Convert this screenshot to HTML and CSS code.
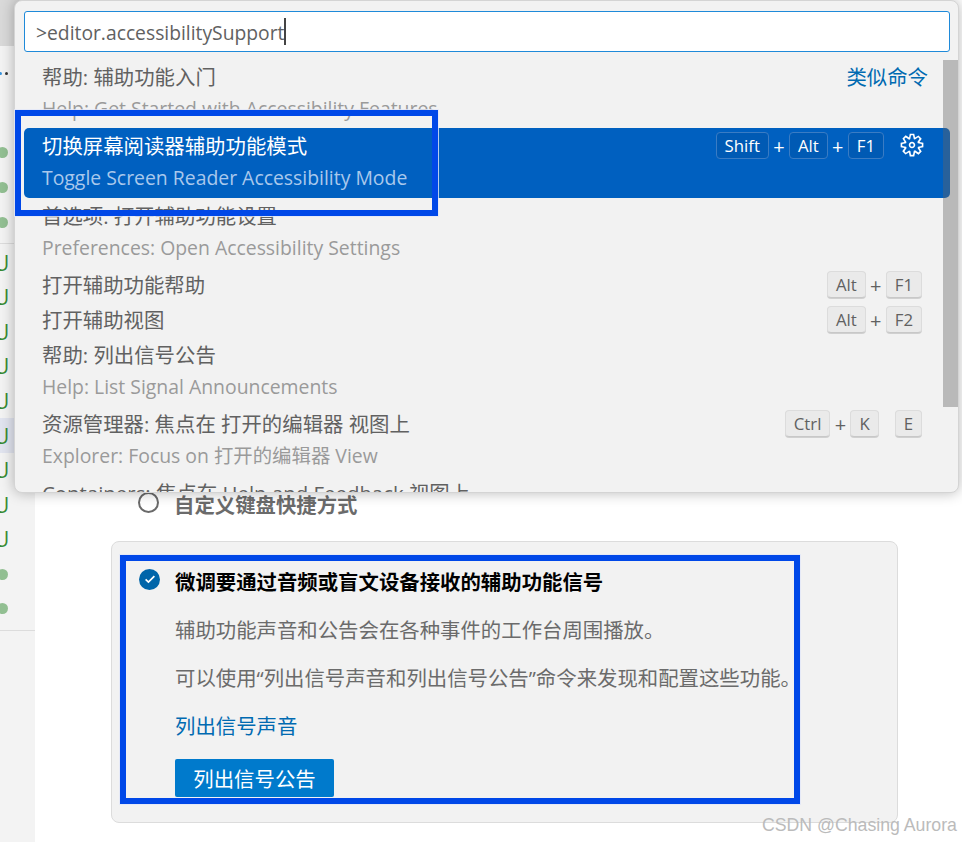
FILE: index.html
```html
<!DOCTYPE html>
<html lang="zh-CN">

<head>
    <meta charset="utf-8">
    <title>Command Palette</title>
    <link rel="stylesheet" href="styles.css">
</head>

<body>
    <div class="workbench">
        <div class="sidebar">
            <div class="sidebar-header"></div>
            <div class="tree-row more-row"><span class="more-dot blue"></span><span class="more-dot"></span></div>
            <div class="tree-group first-group">
                <div class="tree-row"><span class="dot"></span></div>
                <div class="tree-row"><span class="dot"></span></div>
                <div class="tree-row"><span class="dot"></span></div>
            </div>
            <div class="tree-group">
                <div class="tree-row"><span class="untracked">U</span></div>
                <div class="tree-row"><span class="untracked">U</span></div>
                <div class="tree-row"><span class="untracked">U</span></div>
                <div class="tree-row"><span class="untracked">U</span></div>
                <div class="tree-row"><span class="untracked">U</span></div>
                <div class="tree-row active"><span class="untracked">U</span></div>
                <div class="tree-row"><span class="untracked">U</span></div>
                <div class="tree-row"><span class="untracked">U</span></div>
                <div class="tree-row"><span class="untracked">U</span></div>
                <div class="tree-row"><span class="dot"></span></div>
                <div class="tree-row"><span class="dot"></span></div>
            </div>
        </div>

        <div class="main">
            <div class="step">
                <span class="radio"></span>
                <div class="step-title muted">自定义键盘快捷方式</div>
            </div>
            <div class="step card">
                <span class="check">
                    <svg viewBox="0 0 16 16" width="14" height="14">
                        <path d="M3 8.5l3.2 3L13 4.8" fill="none" stroke="#fff" stroke-width="2"/>
                    </svg>
                </span>
                <div class="step-body">
                    <div class="step-title">微调要通过音频或盲文设备接收的辅助功能信号</div>
                    <p class="step-text">辅助功能声音和公告会在各种事件的工作台周围播放。</p>
                    <p class="step-text">可以使用“列出信号声音和列出信号公告”命令来发现和配置这些功能。</p>
                    <a class="step-link">列出信号声音</a>
                    <button class="step-button">列出信号公告</button>
                </div>
            </div>
        </div>
    </div>

    <div class="palette">
        <div class="palette-input">&gt;editor.accessibilitySupport<span class="caret"></span></div>
        <div class="palette-list">
            <div class="row tall">
                <div>
                    <div class="row-title">帮助: 辅助功能入门</div>
                    <div class="row-sub">Help: Get Started with Accessibility Features</div>
                </div>
                <a class="row-link">类似命令</a>
            </div>
            <div class="row tall selected">
                <div>
                    <div class="row-title">切换屏幕阅读器辅助功能模式</div>
                    <div class="row-sub">Toggle Screen Reader Accessibility Mode</div>
                </div>
                <div class="keys">
                    <kbd>Shift</kbd><i>+</i><kbd>Alt</kbd><i>+</i><kbd>F1</kbd>
                    <svg class="gear" viewBox="0 0 16 16" width="26" height="26">
                        <path fill="#fff" fill-rule="evenodd" d="M9.1 4.4L8.6 2H7.4l-.5 2.4-.7.3-2-1.3-.9.8 1.3 2-.2.7-2.4.5v1.2l2.4.5.3.8-1.3 2 .8.8 2-1.3.8.3.4 2.3h1.2l.5-2.4.8-.3 2 1.3.8-.8-1.3-2 .3-.8 2.3-.4V7.4l-2.4-.5-.3-.8 1.3-2-.8-.8-2 1.3-.7-.2zM9.4 1l.5 2.4L12 2.1l2 2-1.4 2.1 2.4.4v2.8l-2.4.5L14 12l-2 2-2.1-1.4-.5 2.4H6.6l-.5-2.4L4 13.9l-2-2 1.4-2.1L1 9.4V6.6l2.4-.5L2.1 4l2-2 2.1 1.4.4-2.4h2.8zm.6 7c0 1.1-.9 2-2 2s-2-.9-2-2 .9-2 2-2 2 .9 2 2zM8 9c.6 0 1-.4 1-1s-.4-1-1-1-1 .4-1 1 .4 1 1 1z"/>
                    </svg>
                </div>
            </div>
            <div class="row tall">
                <div>
                    <div class="row-title">首选项: 打开辅助功能设置</div>
                    <div class="row-sub">Preferences: Open Accessibility Settings</div>
                </div>
            </div>
            <div class="row">
                <div class="row-title">打开辅助功能帮助</div>
                <div class="keys"><kbd>Alt</kbd><i>+</i><kbd>F1</kbd></div>
            </div>
            <div class="row">
                <div class="row-title">打开辅助视图</div>
                <div class="keys"><kbd>Alt</kbd><i>+</i><kbd>F2</kbd></div>
            </div>
            <div class="row tall">
                <div>
                    <div class="row-title">帮助: 列出信号公告</div>
                    <div class="row-sub">Help: List Signal Announcements</div>
                </div>
            </div>
            <div class="row tall">
                <div>
                    <div class="row-title">资源管理器: 焦点在 打开的编辑器 视图上</div>
                    <div class="row-sub">Explorer: Focus on 打开的编辑器 View</div>
                </div>
                <div class="keys"><kbd>Ctrl</kbd><i>+</i><kbd>K</kbd><kbd class="chord">E</kbd></div>
            </div>
            <div class="row tall">
                <div>
                    <div class="row-title">Containers: 焦点在 Help and Feedback 视图上</div>
                </div>
            </div>
        </div>
        <div class="palette-scrollbar"></div>
    </div>

    <div class="mark mark-command"></div>
    <div class="mark mark-card"></div>
    <div class="watermark">CSDN @Chasing Aurora</div>
</body>

</html>
```

FILE: styles.css
```css
* {
    box-sizing: border-box;
}

html,
body {
    margin: 0;
    height: 842px;
    overflow: hidden;
}

body {
    position: relative;
    background-color: #fff;
    font-family: "Open Sans", "Noto Sans CJK SC", sans-serif;
    font-size: 20.4px;
    color: #616161;
}

.workbench {
    display: flex;
    height: 842px;
}

/* left strip of the explorer, mostly hidden by the palette */
.sidebar {
    width: 35px;
    flex-shrink: 0;
    background-color: #f3f3f3;
    overflow: hidden;
}

.sidebar-header {
    height: 46px;
    background-color: #d9d9d9;
}

.tree-row {
    height: 34.6px;
    display: flex;
    align-items: center;
}

.tree-row.active {
    background-color: #e1e4ef;
}

.more-row {
    margin-top: 10px;
    gap: 3px;
}

.more-dot {
    width: 3px;
    height: 3px;
    border-radius: 50%;
    background-color: #333;
}

.more-dot.blue {
    background-color: #3a94dc;
    margin-left: -1px;
}

.first-group {
    margin-top: 45px;
}

.tree-group {
    border-bottom: 1px solid #dcdcdc;
    padding-bottom: 4px;
}

.first-group + .tree-group {
    padding-top: 1px;
}

.dot {
    width: 11px;
    height: 11px;
    margin-left: -3px;
    border-radius: 50%;
    background-color: #92bf92;
}

.untracked {
    margin-left: -6px;
    font-size: 21px;
    color: #388a34;
}

.main {
    flex: 1;
    padding: 490px 0 0 76px;
}

.step {
    display: flex;
    gap: 15px;
    width: 787px;
    padding-left: 27px;
    line-height: 30px;
}

.radio,
.check {
    width: 21px;
    height: 21px;
    margin-top: 1.5px;
    border-radius: 50%;
    flex-shrink: 0;
}

.radio {
    border: 2px solid #6a6a6a;
    background-color: #fff;
}

.check {
    display: flex;
    align-items: center;
    justify-content: center;
    background-color: #0065a9;
}

.step-title {
    font-weight: bold;
    color: #000;
}

.step-title.muted {
    color: #6b6b6b;
}

.card {
    height: 282px;
    margin-top: 21px;
    padding-top: 25px;
    background-color: #f2f2f2;
    border: 1px solid #dcdcdc;
    border-radius: 8px;
}

.step-body {
    display: flex;
    flex-direction: column;
    align-items: flex-start;
}

.step-text {
    margin: 18px 0 0;
    color: #6b6b6b;
}

.step-link {
    margin-top: 18px;
    color: #006ab1;
}

.step-button {
    width: 159px;
    height: 38px;
    margin-top: 18px;
    padding: 0;
    border: none;
    border-radius: 2px;
    background-color: #007acc;
    color: #fff;
    font-family: inherit;
    font-size: 20.4px;
}

/* command palette */
.palette {
    position: absolute;
    left: 14px;
    top: 0;
    width: 945px;
    height: 493px;
    padding: 10px 8px 0 9px;
    background-color: #f2f2f2;
    border: 1px solid #d4d4d4;
    border-radius: 8px;
    box-shadow: 0 0 14px rgba(0, 0, 0, 0.28);
    overflow: hidden;
}

.palette-input {
    display: flex;
    align-items: center;
    height: 41px;
    padding: 2px 0 0 11px;
    background-color: #fff;
    border: 1px solid #1f8ad9;
    border-radius: 3px;
    font-size: 19.3px;
}

.caret {
    width: 2px;
    height: 27px;
    margin-top: -2px;
    background-color: #444;
}

.palette-list {
    margin-top: 7px;
}

.row {
    display: flex;
    justify-content: space-between;
    height: 35px;
    padding: 0 28px 0 18px;
}

.row.tall {
    height: 69.3px;
}

.row-title {
    line-height: 37px;
}

.row-sub {
    font-size: 19.4px;
    line-height: 25px;
    color: #9a9a9a;
}

.row-link {
    margin-right: -6px;
    line-height: 37px;
    color: #006ab1;
}

.row.selected {
    border-radius: 5px;
    background-color: #0060c0;
    color: #fff;
    padding-right: 25px;
}

.row.selected .row-sub {
    color: #a9c8ec;
}

.keys {
    display: flex;
    align-items: flex-start;
    padding-top: 4px;
}

.keys i {
    width: 20px;
    text-align: center;
    font-style: normal;
    font-size: 20px;
    line-height: 30px;
}

kbd {
    height: 27px;
    padding: 0 8px;
    background-color: #eaeaea;
    border: 1px solid #dcdcdc;
    border-bottom-color: #c8c8c8;
    border-radius: 4px;
    box-shadow: 0 1px 0 #d0d0d0;
    font-family: inherit;
    font-size: 16.8px;
    line-height: 25px;
}

kbd.chord {
    margin-left: 16px;
}

.selected kbd {
    background-color: #005ab4;
    border-color: #3a7cc4;
    box-shadow: none;
}

.gear {
    margin-left: 15px;
}

.palette-scrollbar {
    position: absolute;
    right: 0;
    top: 59px;
    width: 15px;
    height: 347px;
    background-color: rgba(100, 100, 100, 0.4);
}

/* blue rectangles drawn on top of the screenshot */
.mark {
    position: absolute;
    border: 6px solid #0048e8;
    box-shadow: 0 0 0 1px rgba(225, 230, 248, 0.8);
}

.mark-command {
    left: 15px;
    top: 110px;
    width: 423px;
    height: 106px;
}

.mark-card {
    left: 120px;
    top: 555px;
    width: 680px;
    height: 249px;
}

.watermark {
    position: absolute;
    left: 762px;
    top: 814px;
    font-family: "Liberation Sans", sans-serif;
    font-size: 17.7px;
    line-height: 22px;
    white-space: nowrap;
    color: #bbb;
}
```
